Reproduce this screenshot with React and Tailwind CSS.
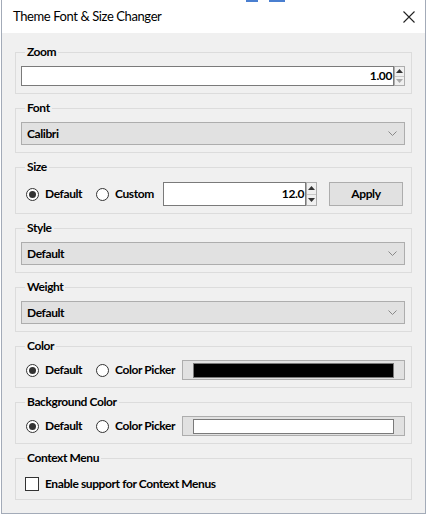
import React from 'react';

const FONT = "font-['Lato',sans-serif]";
const LABEL = 'text-[12px] font-bold tracking-[-0.4px] whitespace-nowrap';

const Group = ({ title, children, pt = 'pt-[6px]', pb = 'pb-[7px]' }) => (
  <fieldset className={`border border-[#dcdcdc] px-[5px] pr-[6px] ${pb} ${pt} min-w-0`}>
    <legend className={`ml-[4px] px-[2px] leading-[16px] text-black ${LABEL}`}>{title}</legend>
    {children}
  </fieldset>
);

const Arrow = ({ up, color = '#333' }) => (
  <svg width="7" height="4" viewBox="0 0 7 4">
    <path d={up ? 'M0 4 L3.5 0 L7 4 Z' : 'M0 0 L3.5 4 L7 0 Z'} fill={color} />
  </svg>
);

const Spinner = ({ downColor = '#333' }) => (
  <div className="flex flex-col w-[11px] self-stretch border border-[#adadad] bg-[#f0f0f0]">
    <div className="flex-1 flex items-center justify-center border-b border-[#c8c8c8]">
      <Arrow up />
    </div>
    <div className="flex-1 flex items-center justify-center">
      <Arrow color={downColor} />
    </div>
  </div>
);

const Select = ({ value }) => (
  <div className="flex items-center h-[23px] border border-[#adadad] bg-[#e1e1e1] pl-[5px] pr-[7px]">
    <span className={`flex-1 ${LABEL}`}>{value}</span>
    <svg width="9" height="5" viewBox="0 0 9 5">
      <path d="M0.5 0.5 L4.5 4.5 L8.5 0.5" fill="none" stroke="#888" strokeWidth="1" />
    </svg>
  </div>
);

const Radio = ({ checked, label, width }) => (
  <div className={`flex items-center shrink-0 ${width}`}>
    <span className="flex items-center justify-center w-[13px] h-[13px] rounded-full border border-[#333] bg-white">
      {checked && <span className="w-[7px] h-[7px] rounded-full bg-[#333]" />}
    </span>
    <span className={`ml-[6px] ${LABEL}`}>{label}</span>
  </div>
);

const ColorField = ({ fill }) => (
  <div className="flex-1 flex items-center h-[20px] border border-[#adadad] bg-[#e1e1e1] pl-[10px] pr-[10px]">
    <div className={`flex-1 h-[15px] border border-[#7a7a7a] ${fill}`} />
  </div>
);

const ColorRow = ({ fill }) => (
  <div className="flex items-center h-[20px] pl-[5px]">
    <Radio checked label="Default" width="w-[70px]" />
    <Radio label="Color Picker" width="w-[86px]" />
    <ColorField fill={fill} />
  </div>
);

export default function App() {
  return (
    <div className={`w-[428px] h-[516px] bg-white ${FONT} text-black relative`}>
      <div className="absolute top-0 left-[246px] w-[12px] h-[2px] bg-[#4a7fd0]" />
      <div className="absolute top-0 left-[269px] w-[16px] h-[2px] bg-[#4a7fd0]" />
      <div className="ml-[1px] w-[425px] h-[514px] border border-t-0 border-[#a3abb8] flex flex-col">
        <div className="flex items-center h-[33px] bg-white pl-[11px] pr-[10px]">
          <span className="flex-1 text-[13px] tracking-[-0.4px] pt-[1px] whitespace-nowrap">Theme Font &amp; Size Changer</span>
          <svg width="12" height="12" viewBox="0 0 12 12">
            <path d="M0.5 0.5 L11.5 11.5 M11.5 0.5 L0.5 11.5" stroke="#222" strokeWidth="1.1" />
          </svg>
        </div>
        <div className="flex-1 bg-[#f0f0f0] px-[13px] pt-[11px] flex flex-col gap-[6px]">
          <Group title="Zoom">
            <div className="flex h-[20px]">
              <div className={`flex-1 flex items-center justify-end border border-[#7a7a7a] bg-white pr-[1px] ${LABEL}`}>
                1.00
              </div>
              <Spinner downColor="#aaa" />
            </div>
          </Group>

          <Group title="Font">
            <Select value="Calibri" />
          </Group>

          <Group title="Size" pt="pt-[7px]">
            <div className="flex items-center h-[24px] pl-[5px]">
              <Radio checked label="Default" width="w-[70px]" />
              <Radio label="Custom" width="w-[67px]" />
              <div className="flex h-[24px] w-[154px]">
                <div className={`flex-1 flex items-center justify-end border border-[#7a7a7a] bg-white pr-[1px] ${LABEL}`}>
                  12.0
                </div>
                <Spinner />
              </div>
              <button className={`ml-[12px] w-[74px] h-[24px] border border-[#adadad] bg-[#e1e1e1] ${LABEL}`}>
                Apply
              </button>
            </div>
          </Group>

          <Group title="Style">
            <Select value="Default" />
          </Group>

          <Group title="Weight">
            <Select value="Default" />
          </Group>

          <Group title="Color">
            <ColorRow fill="bg-black" />
          </Group>

          <Group title="Background Color">
            <ColorRow fill="bg-white" />
          </Group>

          <Group title="Context Menu" pt="pt-[8px]" pb="pb-[5px]">
            <div className="flex items-center h-[20px] pl-[4px]">
              <span className="w-[14px] h-[14px] border border-[#333] bg-white" />
              <span className={`ml-[6px] ${LABEL}`}>Enable support for Context Menus</span>
            </div>
          </Group>
        </div>
      </div>
    </div>
  );
}
